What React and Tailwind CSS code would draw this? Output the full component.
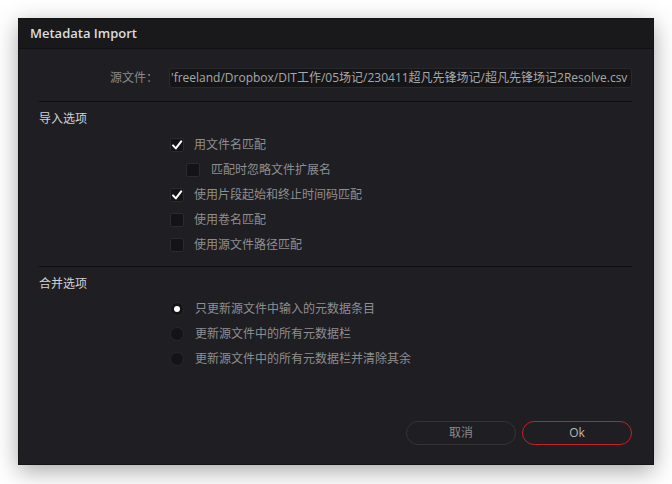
import React from "react";

const font = { fontFamily: '"Open Sans", "Noto Sans CJK SC", sans-serif' };

const CheckBox = ({ checked }) => (
  <div className="w-[14px] h-[14px] rounded-[2px] bg-[#141416] border border-[#2b2b2f] flex items-center justify-center shrink-0">
    {checked && (
      <svg width="12" height="12" viewBox="0 0 12 12">
        <path
          d="M2 6.4 L4.8 9.4 L10.2 2.4"
          fill="none"
          stroke="#ffffff"
          strokeWidth="2"
          strokeLinecap="round"
          strokeLinejoin="round"
        />
      </svg>
    )}
  </div>
);

const Radio = ({ checked }) => (
  <div className="w-[14px] h-[14px] rounded-full bg-[#141416] border border-[#28282c] flex items-center justify-center shrink-0">
    {checked && <div className="w-[6px] h-[6px] rounded-full bg-white" />}
  </div>
);

const CheckRow = ({ checked, label, indent }) => (
  <div className={`h-[25px] flex items-center ${indent ? "pl-[147px]" : "pl-[131px]"}`}>
    <CheckBox checked={checked} />
    <span className={`${indent ? "ml-[11px]" : "ml-[10px]"} text-[12px] text-[#8e8e90]`}>{label}</span>
  </div>
);

const RadioRow = ({ checked, label }) => (
  <div className="h-[25px] flex items-center pl-[131px]">
    <Radio checked={checked} />
    <span className="ml-[11px] text-[12px] text-[#8e8e90]">{label}</span>
  </div>
);

export default function App() {
  const importOptions = [
    { label: "用文件名匹配", checked: true },
    { label: "匹配时忽略文件扩展名", checked: false, indent: true },
    { label: "使用片段起始和终止时间码匹配", checked: true },
    { label: "使用卷名匹配", checked: false },
    { label: "使用源文件路径匹配", checked: false },
  ];

  const mergeOptions = [
    { label: "只更新源文件中输入的元数据条目", checked: true },
    { label: "更新源文件中的所有元数据栏", checked: false },
    { label: "更新源文件中的所有元数据栏并清除其余", checked: false },
  ];

  return (
    <div className="w-[672px] h-[484px] bg-white pt-[18px] pl-[18px]" style={font}>
      <div className="w-[636px] h-[447px] bg-[#1f1e23] border border-[#141416] shadow-[0_6px_22px_rgba(0,0,0,0.35)] flex flex-col">
        {/* Title bar */}
        <div className="h-[30px] shrink-0 bg-[#19191c] border-b border-[#111113] flex items-center px-[11px]">
          <span className="text-[13px] font-semibold text-[#dcdcdc]">Metadata Import</span>
        </div>

        <div className="flex-1 flex flex-col pl-[20px] pr-[21px]">
          {/* Source file */}
          <div className="mt-[19px] h-[20px] flex items-center">
            <div className="w-[119px] text-right text-[12px] text-[#8a8a8c] shrink-0">源文件：</div>
            <div className="ml-[11px] flex-1 h-[20px] rounded-[3px] bg-[#151517] border border-[#29292d] flex items-center pl-[1px] overflow-hidden whitespace-nowrap">
              <span className="text-[12px] text-[#a8a8aa]">
                'freeland/Dropbox/DIT工作/05场记/230411超凡先锋场记/超凡先锋场记2Resolve.csv
              </span>
            </div>
          </div>

          <div className="mt-[13px] h-px bg-[#0e0e10]" />

          {/* Import options */}
          <div className="pt-[9px] h-[25px] leading-[16px] text-[12px] text-[#d2d2d4]">导入选项</div>
          <div className="mt-[5px] flex flex-col">
            {importOptions.map((o, i) => (
              <CheckRow key={i} {...o} />
            ))}
          </div>

          <div className="mt-[9px] h-px bg-[#0e0e10]" />

          {/* Merge options */}
          <div className="pt-[9px] h-[25px] leading-[16px] text-[12px] text-[#d2d2d4]">合并选项</div>
          <div className="mt-[4px] flex flex-col">
            {mergeOptions.map((o, i) => (
              <RadioRow key={i} {...o} />
            ))}
          </div>

          {/* Buttons */}
          <div className="mt-auto mb-[19px] flex justify-end gap-[6px]">
            <button className="w-[110px] h-[24px] rounded-full border border-[#333338] bg-transparent text-[12px] text-[#8a8a8c]">
              取消
            </button>
            <button className="w-[110px] h-[24px] rounded-full border border-[#c61f2a] bg-transparent text-[12px] text-[#b8b8ba]">
              Ok
            </button>
          </div>
        </div>
      </div>
    </div>
  );
}
